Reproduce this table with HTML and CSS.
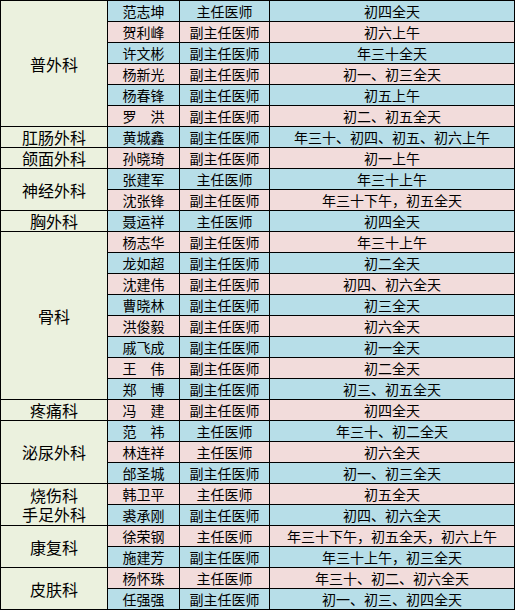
FILE: index.html
```html
<!DOCTYPE html>
<html lang="zh">
<head>
<meta charset="utf-8">
<link rel="stylesheet" href="styles.css">
</head>
<body>
<table class="duty">
<colgroup>
<col class="c-dept"><col class="c-name"><col class="c-title"><col class="c-time">
</colgroup>
<tbody>
<tr class="b"><td class="dept" rowspan="6">普外科</td><td>范志坤</td><td>主任医师</td><td>初四全天</td></tr>
<tr class="p"><td>贺利峰</td><td>副主任医师</td><td>初六上午</td></tr>
<tr class="b"><td>许文彬</td><td>副主任医师</td><td>年三十全天</td></tr>
<tr class="p"><td>杨新光</td><td>副主任医师</td><td>初一、初三全天</td></tr>
<tr class="b"><td>杨春锋</td><td>副主任医师</td><td>初五上午</td></tr>
<tr class="p"><td>罗　洪</td><td>副主任医师</td><td>初二、初五全天</td></tr>
<tr class="b"><td class="dept">肛肠外科</td><td>黄城鑫</td><td>副主任医师</td><td>年三十、初四、初五、初六上午</td></tr>
<tr class="p"><td class="dept">颌面外科</td><td>孙晓琦</td><td>副主任医师</td><td>初一上午</td></tr>
<tr class="b"><td class="dept" rowspan="2">神经外科</td><td>张建军</td><td>主任医师</td><td>年三十上午</td></tr>
<tr class="p"><td>沈张锋</td><td>副主任医师</td><td>年三十下午，初五全天</td></tr>
<tr class="b"><td class="dept">胸外科</td><td>聂运祥</td><td>主任医师</td><td>初四全天</td></tr>
<tr class="p"><td class="dept" rowspan="8">骨科</td><td>杨志华</td><td>副主任医师</td><td>年三十上午</td></tr>
<tr class="b"><td>龙如超</td><td>副主任医师</td><td>初二全天</td></tr>
<tr class="p"><td>沈建伟</td><td>副主任医师</td><td>初四、初六全天</td></tr>
<tr class="b"><td>曹晓林</td><td>副主任医师</td><td>初三全天</td></tr>
<tr class="p"><td>洪俊毅</td><td>副主任医师</td><td>初六全天</td></tr>
<tr class="b"><td>戚飞成</td><td>副主任医师</td><td>初一全天</td></tr>
<tr class="p"><td>王　伟</td><td>副主任医师</td><td>初二全天</td></tr>
<tr class="b"><td>郑　博</td><td>副主任医师</td><td>初三、初五全天</td></tr>
<tr class="p"><td class="dept">疼痛科</td><td>冯　建</td><td>副主任医师</td><td>初四全天</td></tr>
<tr class="b"><td class="dept" rowspan="3">泌尿外科</td><td>范　祎</td><td>主任医师</td><td>年三十、初二全天</td></tr>
<tr class="p"><td>林连祥</td><td>主任医师</td><td>初六全天</td></tr>
<tr class="b"><td>邰圣城</td><td>副主任医师</td><td>初一、初三全天</td></tr>
<tr class="p"><td class="dept two" rowspan="2"><span class="ln">烧伤科</span><span class="ln">手足外科</span></td><td>韩卫平</td><td>主任医师</td><td>初五全天</td></tr>
<tr class="b"><td>裘承刚</td><td>副主任医师</td><td>初四、初六全天</td></tr>
<tr class="p"><td class="dept" rowspan="2">康复科</td><td>徐荣钢</td><td>主任医师</td><td>年三十下午，初五全天，初六上午</td></tr>
<tr class="b"><td>施建芳</td><td>副主任医师</td><td>年三十上午，初三全天</td></tr>
<tr class="p"><td class="dept" rowspan="2">皮肤科</td><td>杨怀珠</td><td>主任医师</td><td>年三十、初二、初六全天</td></tr>
<tr class="b"><td>任强强</td><td>副主任医师</td><td>初一、初三、初四全天</td></tr>
</tbody>
</table>
</body>
</html>
```
FILE: styles.css
```css
html, body {
  margin: 0;
  padding: 0;
  background: #ffffff;
}

.duty {
  width: 515px;
  table-layout: fixed;
  border-collapse: separate;
  border-spacing: 1px;
  background: #000000;
  font-family: "Noto Sans CJK SC", "Noto Sans", sans-serif;
  color: #000000;
}

.c-dept { width: 106px; }
.c-name { width: 71px; }
.c-title { width: 89px; }
.c-time { width: 244px; }

.duty td {
  padding: 0;
  height: 20px;
  line-height: 20px;
  font-size: 14px;
  text-align: center;
  vertical-align: middle;
  white-space: nowrap;
}

.duty tr.b td { background: #b7dee8; }
.duty tr.p td { background: #f2dcdb; }

.duty tr td.dept {
  background: #ebf1de;
  font-size: 16px;
}

.duty td.two .ln {
  display: block;
  height: 19px;
  line-height: 19px;
}
```
